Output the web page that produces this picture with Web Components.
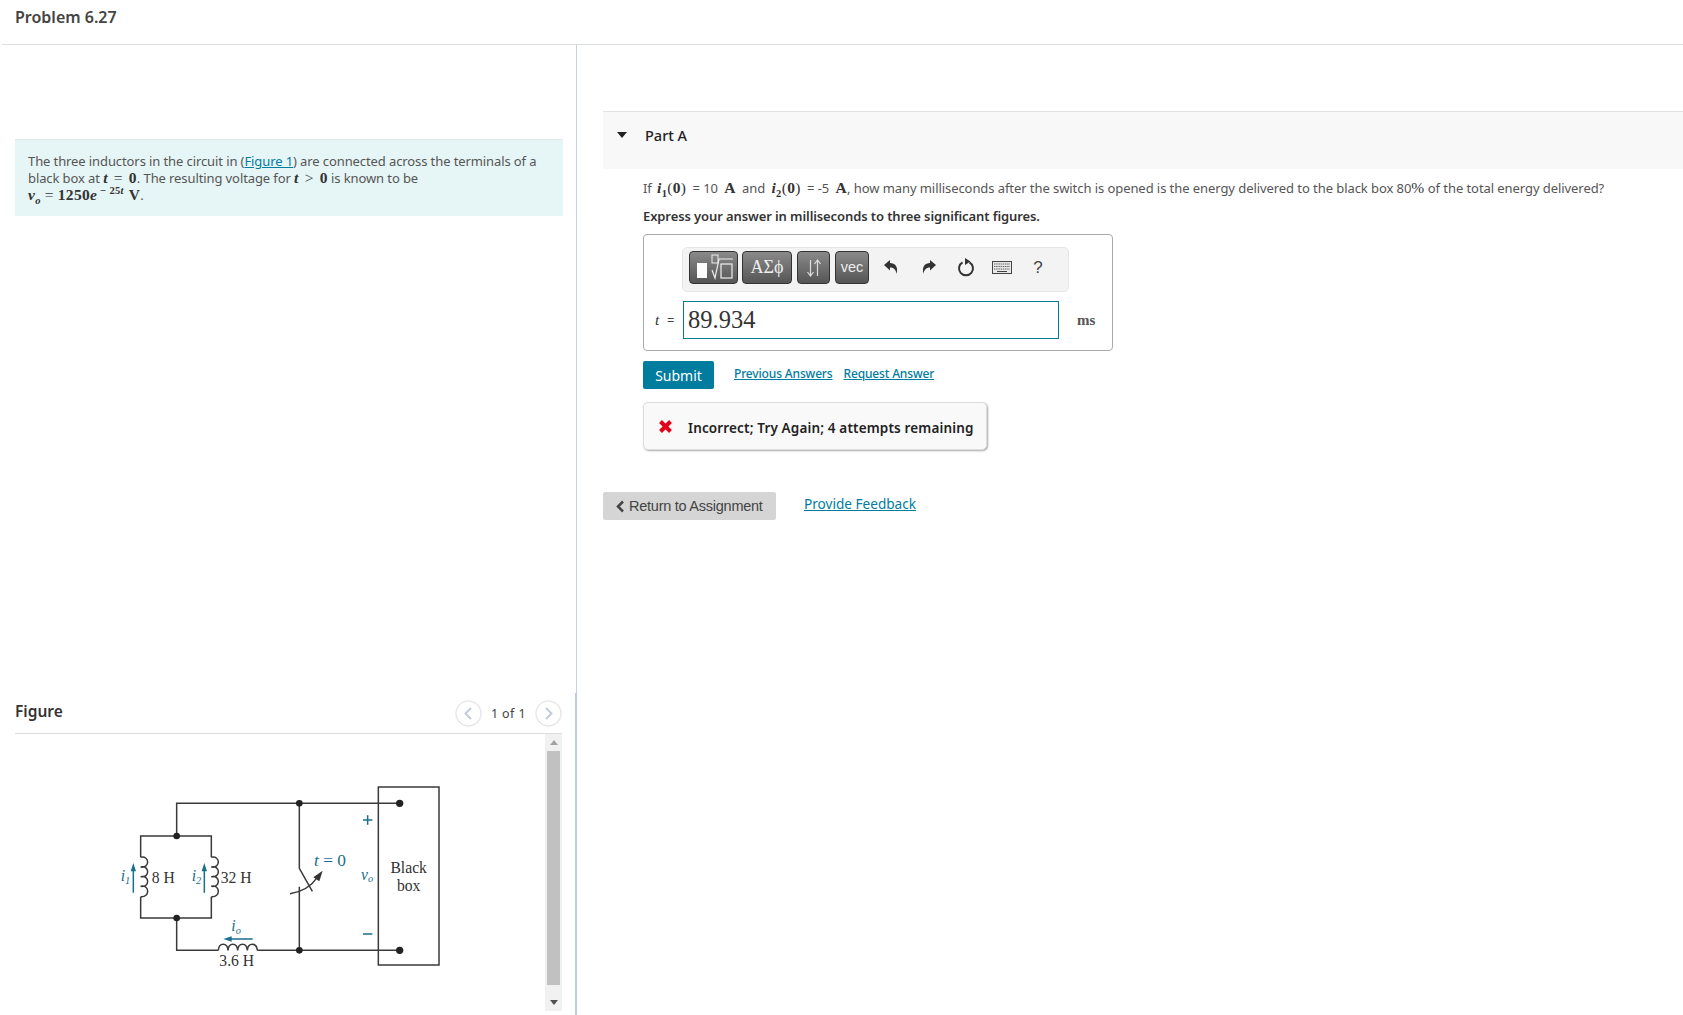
<!DOCTYPE html>
<html>
<head>
<meta charset="utf-8">
<title>Problem 6.27</title>
<style>
  html, body { margin: 0; height: 100%; overflow: hidden; background: #fff; }
</style>
</head>
<body>
<mp-page></mp-page>
<script>
const mathCss = `
  .m { font-family: "Liberation Serif", serif; font-size: 15.5px; line-height: 0; color: #333; letter-spacing: 0.3px; }
  .b { font-weight: bold; }
  .i { font-style: italic; }
  .eq { margin: 0 4px; }
  .eq2 { margin: 0 6px; }
  .m sub, .m sup { font-size: 10.5px; line-height: 0; }
  a { color: #007c9e; }
`;

// header
const $header = document.createElement("template");
$header.innerHTML = /*html */ `
  <style>
    :host { display: block; height: 44px; margin-left: 2px; border-bottom: 1px solid #dcdfe2; }
    h1 { margin: 0; padding: 7px 0 0 13px; font: 600 16px/20px "Noto Sans", sans-serif; color: #444; }
  </style>
  <h1><slot></slot></h1>
`;
class MpHeader extends HTMLElement {
  constructor() {
    super();
    this.attachShadow({ mode: "open" });
    this.shadowRoot.appendChild($header.content.cloneNode(true));
  }
}
customElements.define("mp-header", MpHeader);

// intro box at top of left column
const $intro = document.createElement("template");
$intro.innerHTML = /*html */ `
  <style>
    ${mathCss}
    :host { display: block; height: 648px; padding: 94px 13px 0 15px; box-sizing: border-box; border-right: 1px solid #c9d1dc; }
    .box { background: #e6f5f6; border-top: 1px solid #dfe8ea; padding: 13px 13px 11px 13px; height: 77px; box-sizing: border-box;
      font: 13px/17px "Noto Sans", sans-serif; color: #555; letter-spacing: -0.1px; white-space: nowrap; }
  </style>
  <div class="box">
    The three inductors in the circuit in (<a href="#">Figure 1</a>) are connected across the terminals of a<br>
    black box at <span class="m"><span class="b i">t</span><span class="eq2">=</span><span class="b">0</span></span>. The resulting voltage for <span class="m"><span class="b i">t</span><span class="eq2">&gt;</span><span class="b">0</span></span> is known to be<br>
    <span class="m"><span class="b i">v<sub>o</sub></span><span class="eq">=</span><span class="b">1250<span class="i">e</span><sup style="margin-left:3px">&minus; 25<span class="i">t</span></sup><span style="margin-left:5px">V</span></span></span>.
  </div>
`;
class MpIntro extends HTMLElement {
  constructor() {
    super();
    this.attachShadow({ mode: "open" });
    this.shadowRoot.appendChild($intro.content.cloneNode(true));
  }
}
customElements.define("mp-intro", MpIntro);

// circuit picture, drawn in 3x units of the figure
const $circuit = document.createElement("template");
$circuit.innerHTML = /*html */ `
  <style>
    :host { display: block; width: 360px; height: 210px; }
    svg { display: block; }
    text { font-family: "Liberation Serif", serif; font-size: 47px; fill: #333; }
    .blue { fill: #1b6e8c; }
    .it { font-style: italic; }
    .w { fill: none; stroke: #3a3a3a; stroke-width: 4.5; }
    .a { fill: none; stroke: #1b6e8c; stroke-width: 4.5; }
  </style>
  <svg width="360" height="210" viewBox="0 0 1080 630">
    <rect class="w" x="835" y="51" width="182" height="534"/>
    <path class="w" d="M899 100H230V198M122 262V198H334V262M122 380V444H334V380M230 444V541H355M472 541H899"/>
    <path class="w" d="M122 262c28-6 28 34 0 29c28-6 28 34 0 29c28-6 28 34 0 29c28-6 28 34 0 31"/>
    <path class="w" d="M334 262c28-6 28 34 0 29c28-6 28 34 0 29c28-6 28 34 0 29c28-6 28 34 0 31"/>
    <path class="w" d="M355 541c2-24 27-24 29 0c2-24 27-24 29 0c2-24 27-24 29 0c2-24 28-24 30 0"/>
    <path class="w" d="M598 100V295L637 364M598 350V541"/>
    <path class="w" d="M570 371Q625 362 652 322"/>
    <path d="M668 302L640 322L658 334Z" fill="#333"/>
    <g fill="#222">
      <circle cx="230" cy="198" r="10"/><circle cx="230" cy="444" r="10"/>
      <circle cx="598" cy="100" r="10"/><circle cx="598" cy="541" r="10"/>
      <circle cx="899" cy="100" r="11"/><circle cx="899" cy="541" r="11"/>
    </g>
    <path class="a" d="M100 368V296M313 368V296M458 507H392M803 136V164M789 150H817M789 492H817"/>
    <path d="M100 279L92 304H108ZM313 279L305 304H321ZM370 507L395 499V515Z" fill="#1b6e8c"/>
    <text class="blue it" x="62" y="334">i<tspan font-size="31" dy="7">1</tspan></text>
    <text class="blue it" x="275" y="334">i<tspan font-size="31" dy="7">2</tspan></text>
    <text class="blue it" x="394" y="484">i<tspan font-size="31" dy="7">o</tspan></text>
    <text class="blue it" x="783" y="330">v<tspan font-size="31" dy="7">o</tspan></text>
    <text class="blue" x="642" y="288" style="font-size:52px"><tspan class="it">t</tspan> = 0</text>
    <text x="155" y="338">8 H</text>
    <text x="362" y="338">32 H</text>
    <text x="358" y="588">3.6 H</text>
    <text x="926" y="308" text-anchor="middle">Black</text>
    <text x="926" y="362" text-anchor="middle">box</text>
  </svg>
`;
class CircuitDiagram extends HTMLElement {
  constructor() {
    super();
    this.attachShadow({ mode: "open" });
    this.shadowRoot.appendChild($circuit.content.cloneNode(true));
  }
}
customElements.define("circuit-diagram", CircuitDiagram);

// figure panel with pager and scrollbar
const $figure = document.createElement("template");
$figure.innerHTML = /*html */ `
  <style>
    :host { display: block; height: 323px; overflow: hidden; padding-left: 15px; padding-right: 13px; border-right: 2px solid #bccfe0; }
    .head { display: flex; align-items: center; height: 40px; border-bottom: 1px solid #dedede; }
    h2 { margin: 0 0 5px; flex: 1; font: 600 15.5px/20px "Noto Sans", sans-serif; color: #333; }
    .pager { display: flex; align-items: center; gap: 9px; font: 12.5px "Noto Sans", sans-serif; color: #444; letter-spacing: 0.4px; }
    .pager svg { display: block; }
    .body { display: flex; height: 282px; }
    .view { flex: 1; padding: 36px 0 0 85px; }
    .bar { width: 17px; height: 277px; background: #f1f1f1; display: flex; flex-direction: column; align-items: center; }
    .up, .down { height: 17px; flex: none; display: flex; align-items: center; justify-content: center; }
    .up::before { content: ""; border: 4px solid transparent; border-top: 0; border-bottom: 5px solid #a3a3a3; }
    .down { margin-top: 9px; }
    .down::before { content: ""; border: 4px solid transparent; border-bottom: 0; border-top: 5px solid #505050; }
    .thumb { height: 234px; flex: none; width: 13px; background: #c1c1c1; }
  </style>
  <div class="head">
    <h2>Figure</h2>
    <div class="pager">
      <svg width="27" height="27" viewBox="0 0 27 27"><circle cx="13.500" cy="13.500" r="12.500" fill="#fff" stroke="#e8e8e8" stroke-width="1.500"/><path d="M16 8L10.500 13.500L16 19" fill="none" stroke="#c3ccd6" stroke-width="2"/></svg>
      <span>1 of 1</span>
      <svg width="27" height="27" viewBox="0 0 27 27"><circle cx="13.500" cy="13.500" r="12.500" fill="#fff" stroke="#e8e8e8" stroke-width="1.500"/><path d="M11 8L16.500 13.500L11 19" fill="none" stroke="#c3ccd6" stroke-width="2"/></svg>
    </div>
  </div>
  <div class="body">
    <div class="view"><circuit-diagram></circuit-diagram></div>
    <div class="bar"><div class="up"></div><div class="thumb"></div><div class="down"></div></div>
  </div>
`;
class MpFigure extends HTMLElement {
  constructor() {
    super();
    this.attachShadow({ mode: "open" });
    this.shadowRoot.appendChild($figure.content.cloneNode(true));
  }
}
customElements.define("mp-figure", MpFigure);

// math toolbar
const $toolbar = document.createElement("template");
$toolbar.innerHTML = /*html */ `
  <style>
    :host { display: flex; align-items: flex-start; width: 387px; height: 45px; box-sizing: border-box; padding: 3px 0 0 6px; background: #f3f3f3; border: 1px solid #e6e6e6; border-radius: 5px; }
    .btn { height: 33px; box-sizing: border-box; margin-right: 4px; border: 1px solid #333; border-radius: 4px;
      background: linear-gradient(#8a8a8a, #555); color: #eee; display: flex; align-items: center; justify-content: center; }
    .tpl { width: 49px; }
    .sym { width: 50px; font: 18px "Liberation Serif", serif; }
    .arr { width: 33px; margin-left: 1px; }
    .vec { width: 34px; font: 14.5px "Liberation Sans", sans-serif; margin-right: 0; margin-left: 1px; padding-bottom: 2px; }
    .ic { width: 36px; height: 33px; flex: none; display: flex; justify-content: center; align-items: center; color: #333; }
    .ic.wide { width: 38px; }
    .ic svg { display: block; }
    .q { font: 17px "Liberation Sans", sans-serif; color: #444; }
  </style>
  <div class="btn tpl">
    <svg width="47" height="31" viewBox="0 0 47 31">
      <rect x="7" y="11" width="10" height="15" fill="#fff"/>
      <rect x="22" y="3" width="6" height="8" fill="none" stroke="#eee"/>
      <path d="M22 18l3 8l4-19h14" fill="none" stroke="#eee" stroke-width="1.200"/>
      <rect x="31" y="12" width="11" height="14" fill="none" stroke="#eee" stroke-width="1.200"/>
    </svg>
  </div>
  <div class="btn sym">ΑΣϕ</div>
  <div class="btn arr">
    <svg width="18" height="20" viewBox="0 0 18 20"><path d="M5.500 2V17M2.500 14l3 4l3-4M12.500 18V3M9.500 6l3-4l3 4" fill="none" stroke="#ddd" stroke-width="1.200"/></svg>
  </div>
  <div class="btn vec">vec</div>
  <div class="ic wide" style="margin-left:3px">
    <svg width="16" height="17" viewBox="0 0 16 17"><path d="M1 6L7 1V4C12 4 15.500 7.500 13.500 15C13 11 11 8.500 7 8.500V11.500Z" fill="#333"/></svg>
  </div>
  <div class="ic wide">
    <svg width="16" height="17" viewBox="0 0 16 17"><path d="M15 6L9 1V4C4 4 .5 7.500 2.500 15C3 11 5 8.500 9 8.500V11.500Z" fill="#333"/></svg>
  </div>
  <div class="ic">
    <svg width="18" height="19" viewBox="0 0 18 19"><path d="M5.500 4.300A7 7 0 1 0 12.500 4.300" fill="none" stroke="#333" stroke-width="2"/><path d="M8 0V7L13.500 3.500Z" fill="#333"/></svg>
  </div>
  <div class="ic">
    <svg width="20" height="13" viewBox="0 0 20 13"><rect x=".5" y=".5" width="19" height="12" fill="#e8e8e8" stroke="#444"/><path d="M2 3H18M2 5.500H18M2 8H18" stroke="#666" stroke-dasharray="1.500 .7"/><path d="M5 10.500H15" stroke="#444"/></svg>
  </div>
  <div class="ic q">?</div>
`;
class MathToolbar extends HTMLElement {
  constructor() {
    super();
    this.attachShadow({ mode: "open" });
    this.shadowRoot.appendChild($toolbar.content.cloneNode(true));
  }
}
customElements.define("math-toolbar", MathToolbar);

// the answer card: toolbar, input, unit
const $answer = document.createElement("template");
$answer.innerHTML = /*html */ `
  <style>
    ${mathCss}
    :host { display: block; width: 470px; height: 117px; box-sizing: border-box; padding: 12px 0 0 38px; border: 1px solid #aaa; border-radius: 4px; }
    .row { display: flex; align-items: center; margin: 9px 0 0 -27px; height: 38px; }
    .lbl { width: 28px; font: 13px "Noto Sans", sans-serif; color: #444; white-space: nowrap; word-spacing: 4px; }
    .input { width: 376px; height: 38px; box-sizing: border-box; border: 1px solid #007c9e; padding-left: 4px;
      font: 24.5px/36px "Liberation Serif", serif; color: #333; }
    .unit { margin-left: 18px; padding-top: 1px; font: bold 15px "Liberation Serif", serif; color: #555; }
  </style>
  <math-toolbar></math-toolbar>
  <div class="row">
    <div class="lbl"><span class="m i">t</span> =</div>
    <div class="input">89.934</div>
    <div class="unit">ms</div>
  </div>
`;
class AnswerBox extends HTMLElement {
  constructor() {
    super();
    this.attachShadow({ mode: "open" });
    this.shadowRoot.appendChild($answer.content.cloneNode(true));
  }
}
customElements.define("answer-box", AnswerBox);

// part A
const $part = document.createElement("template");
$part.innerHTML = /*html */ `
  <style>
    ${mathCss}
    :host { display: block; margin-top: 66px; font-family: "Noto Sans", sans-serif; }
    .title { height: 58px; box-sizing: border-box; background: #f8f8f8; border-top: 1px solid #e2e2e2; display: flex; padding: 13px 0 0 14px; }
    .tri { width: 0; height: 0; margin-top: 7px; border: 5.500px solid transparent; border-bottom: 0; border-top: 6px solid #222; }
    .title span { margin-left: 18px; font: 500 14.5px/20px "Noto Sans", sans-serif; color: #222; }
    .content { padding-left: 40px; }
    .q { margin: 9px 0 0; font-size: 13px; line-height: 20px; color: #555; letter-spacing: -0.07px; white-space: nowrap; }
    .q .w { margin: 0 3px; }
    .q .if { margin-right: 2px; }
    .hint { margin: 8px 0 8px; font-size: 13px; line-height: 20px; font-weight: 600; color: #333; letter-spacing: -0.1px; }
    .actions { display: flex; align-items: flex-start; margin-top: 10px; }
    .submit { width: 71px; height: 28px; background: #007c9e; color: #fff; border-radius: 2px; font-size: 14px; line-height: 29px; text-align: center; }
    .links { margin: 1px 0 0 20px; font-size: 12px; font-weight: 500; line-height: 24px; display: flex; gap: 11px; letter-spacing: -0.15px; }
    .msg { display: flex; align-items: center; width: 344px; height: 48px; box-sizing: border-box; margin-top: 13px; padding-left: 14px;
      background: #f9f9f9; border: 1px solid #ddd; border-radius: 5px; box-shadow: 1px 1px 2px #aaa; font-size: 13.5px; font-weight: 600; color: #222; letter-spacing: 0.15px; }
    .msg svg { display: block; margin: 0 15px 0 0; }
    .msg span { padding-top: 4px; }
  </style>
  <div class="title"><div class="tri"></div><span>Part A</span></div>
  <div class="content">
    <p class="q"><span class="if">If</span> <span class="m"><span class="b i">i</span><sub class="b">1</sub>(<span class="b">0</span>)</span><span class="w"> = 10 </span><span class="m b">A</span><span class="w"> and </span><span class="m"><span class="b i">i</span><sub class="b">2</sub>(<span class="b">0</span>)</span><span class="w"> = -5 </span><span class="m b">A</span>, how many milliseconds after the switch is opened is the energy delivered to the black box 80<span class="m">%</span> of the total energy delivered?</p>
    <p class="hint">Express your answer in milliseconds to three significant figures.</p>
    <answer-box></answer-box>
    <div class="actions">
      <div class="submit">Submit</div>
      <div class="links"><a href="#">Previous Answers</a><a href="#">Request Answer</a></div>
    </div>
    <div class="msg">
      <svg width="15" height="15" viewBox="0 0 15 15"><path d="M2.500 2.500L12.500 12.500M12.500 2.500L2.500 12.500" stroke="#e2001a" stroke-width="4"/></svg>
      <span>Incorrect; Try Again; 4 attempts remaining</span>
    </div>
  </div>
`;
class MpPart extends HTMLElement {
  constructor() {
    super();
    this.attachShadow({ mode: "open" });
    this.shadowRoot.appendChild($part.content.cloneNode(true));
  }
}
customElements.define("mp-part", MpPart);

// footer row under the part
const $footer = document.createElement("template");
$footer.innerHTML = /*html */ `
  <style>
    a { color: #007c9e; }
    :host { display: flex; align-items: flex-start; margin-top: 42px; }
    .ret { display: flex; align-items: center; width: 173px; height: 28px; box-sizing: border-box; padding-left: 13px; background: #d5d5d5; border-radius: 2px;
      font: 14.5px "Liberation Sans", sans-serif; color: #444; white-space: nowrap; letter-spacing: -0.25px; }
    .ret svg { margin-right: 4px; display: block; }
    .fb { margin-left: 28px; font: 13.6px/24px "Noto Sans", sans-serif; }
  </style>
  <div class="ret">
    <svg width="9" height="13" viewBox="0 0 9 13"><path d="M7 1.500L2 6.500l5 5" fill="none" stroke="#444" stroke-width="2.500"/></svg>
    Return to Assignment
  </div>
  <a class="fb" href="#">Provide Feedback</a>
`;
class MpFooter extends HTMLElement {
  constructor() {
    super();
    this.attachShadow({ mode: "open" });
    this.shadowRoot.appendChild($footer.content.cloneNode(true));
  }
}
customElements.define("mp-footer", MpFooter);

// whole page
const $page = document.createElement("template");
$page.innerHTML = /*html */ `
  <style>
    :host { display: block; width: 1683px; height: 1015px; overflow: hidden; }
    .main { display: flex; height: 970px; }
    .left { width: 577px; flex: none; }
    .right { flex: 1; padding-left: 26px; min-width: 0; }
  </style>
  <mp-header>Problem 6.27</mp-header>
  <div class="main">
    <div class="left">
      <mp-intro></mp-intro>
      <mp-figure></mp-figure>
    </div>
    <div class="right">
      <mp-part></mp-part>
      <mp-footer></mp-footer>
    </div>
  </div>
`;
class MpPage extends HTMLElement {
  constructor() {
    super();
    this.attachShadow({ mode: "open" });
    this.shadowRoot.appendChild($page.content.cloneNode(true));
  }
}
customElements.define("mp-page", MpPage);
</script>
</body>
</html>
